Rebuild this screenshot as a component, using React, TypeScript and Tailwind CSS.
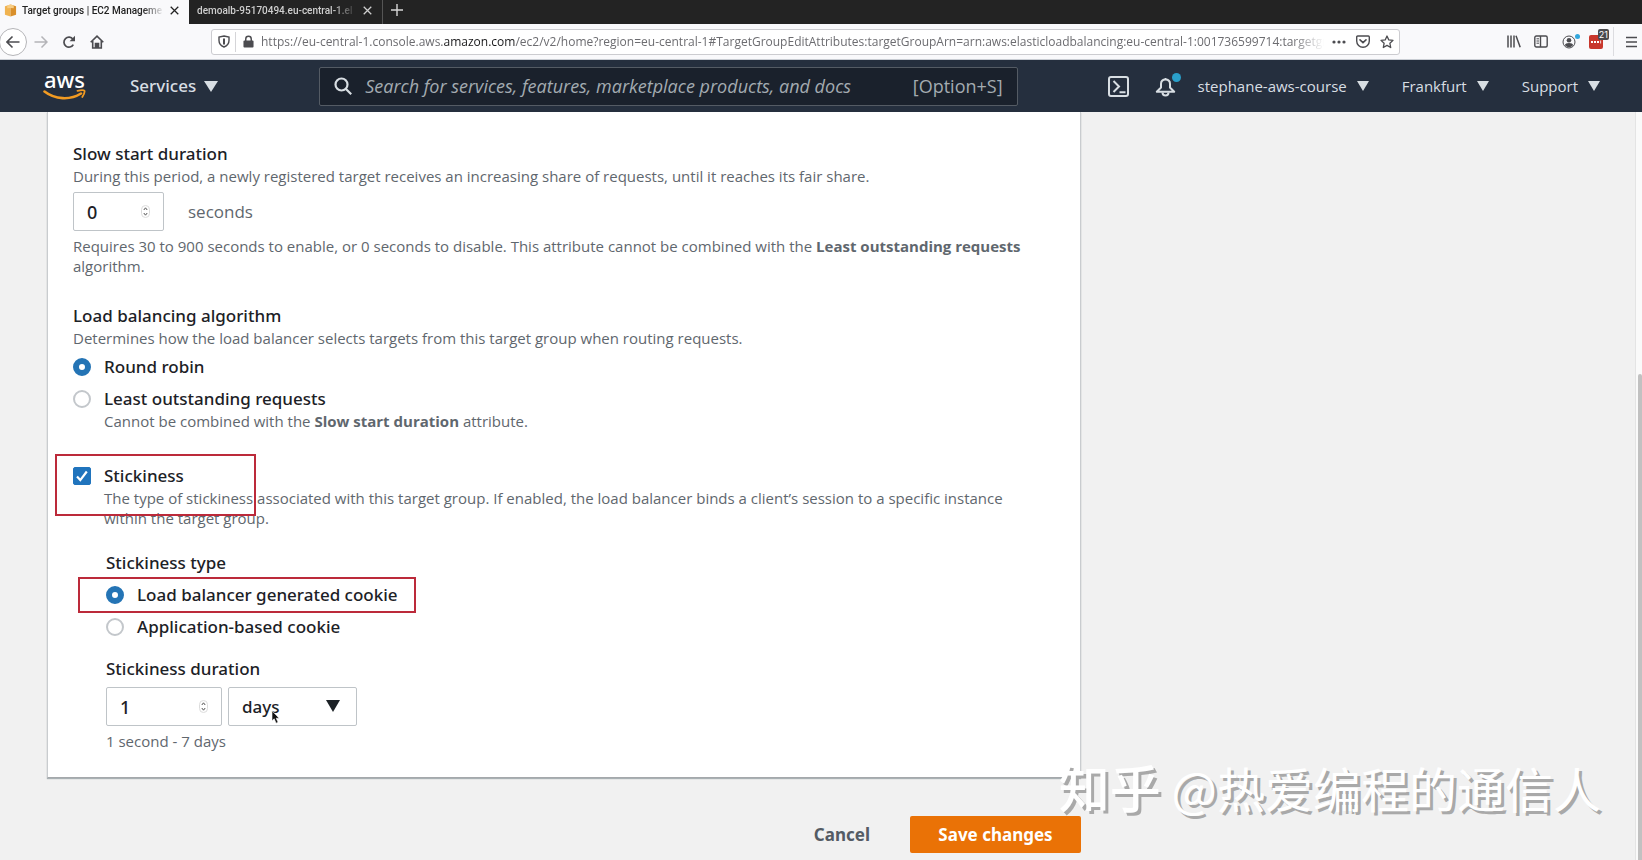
import { useState } from "react";
import type { ReactNode } from "react";

const url = {
  start: "https://eu-central-1.console.aws.",
  host: "amazon.com",
  rest: "/ec2/v2/home?region=eu-central-1#TargetGroupEditAttributes:targetGroupArn=arn:aws:elasticloadbalancing:eu-central-1:001736599714:targetgrou",
};

const menus = ["stephane-aws-course", "Frankfurt", "Support"];

const Triangle = ({ className }: { className: string }) => (
  <svg viewBox="0 0 14 12" preserveAspectRatio="none" className={className} fill="currentColor">
    <path d="M0 0h14L7 12z" />
  </svg>
);

const CloseIcon = () => (
  <svg viewBox="0 0 10 10" className="size-[9px]" fill="none" stroke="currentColor" strokeWidth="1.4">
    <path d="M.8.8l8.4 8.4M9.2.8L.8 9.2" />
  </svg>
);

const Tabs = () => (
  <div className="flex h-6 items-stretch bg-[#232323] font-['Roboto',sans-serif] text-[10px]">
    <div className="flex w-[189px] items-center bg-[#f9f9fb] pb-1 pl-1 text-[#222]">
      <svg viewBox="0 0 14 14" className="size-[13px] shrink-0">
        <path d="M1 2.5L7 .5v13l-6-2z" fill="#f0b350" />
        <path d="M7 .5l6 2v9l-6 2z" fill="#d98f2b" />
        <path d="M3.5 1.7L7 .5l3.500 1.200v3L7 4.200l-3.500.5z" fill="#f7cd84" />
      </svg>
      <span className="ml-[5px] w-[142px] overflow-hidden whitespace-nowrap font-medium [mask-image:linear-gradient(to_right,black_85%,transparent)]">
        Target groups | EC2 Manageme
      </span>
      <button aria-label="Close tab" className="ml-[6px]">
        <CloseIcon />
      </button>
    </div>
    <div className="flex w-[194px] items-center border-r border-[#555] pb-1 pl-2 text-[#cfcfcf]">
      <span className="w-[160px] overflow-hidden whitespace-nowrap font-medium [mask-image:linear-gradient(to_right,black_85%,transparent)]">
        demoalb-95170494.eu-central-1.el
      </span>
      <button aria-label="Close tab" className="ml-[6px]">
        <CloseIcon />
      </button>
    </div>
    <button aria-label="New tab" className="pb-1 pl-2 text-[#d8d8d8]">
      <svg viewBox="0 0 12 12" className="size-3" stroke="currentColor" strokeWidth="1.4">
        <path d="M6 0v12M0 6h12" />
      </svg>
    </button>
  </div>
);

const Toolbar = () => (
  <div className="flex h-9 items-center border-b border-[#c9cdd3] bg-[#f9f9fb] text-[#4c4c50]">
    <button aria-label="Back" className="-ml-px grid size-7 place-items-center rounded-full border border-[#b5b5b8] bg-white">
      <svg viewBox="0 0 14 14" className="size-[14px]" fill="none" stroke="currentColor" strokeWidth="1.6">
        <path d="M13.500 7H1.200M6.500 1.500L1 7l5.500 5.500" />
      </svg>
    </button>
    <button aria-label="Forward" className="ml-[7px] text-[#b4b4b8]">
      <svg viewBox="0 0 14 14" className="size-[14px]" fill="none" stroke="currentColor" strokeWidth="1.5">
        <path d="M.5 7h12.300M7.500 1.500L13 7l-5.500 5.500" />
      </svg>
    </button>
    <button aria-label="Reload" className="ml-[14px]">
      <svg viewBox="0 0 14 14" className="size-[14px]" fill="none" stroke="currentColor" strokeWidth="1.7">
        <path d="M11.300 9.600A5 5 0 1 1 11 4.200" />
        <path d="M13 .8v5.400H7.600z" fill="currentColor" stroke="none" />
      </svg>
    </button>
    <button aria-label="Home" className="ml-[14px]">
      <svg viewBox="0 0 14 14" className="size-[14px]" fill="none" stroke="currentColor" strokeWidth="1.6">
        <path d="M.7 7.300L7 1.200l6.300 6.100M2.700 6v7h8.600V6" />
        <path d="M5.500 13V8.500h3V13" fill="currentColor" />
      </svg>
    </button>
    <div className="ml-[107px] flex h-[26px] min-w-0 flex-1 items-center rounded-[3px] border border-[#ccccd0] bg-white pl-[6px] pr-[5px]">
      <svg viewBox="0 0 12 13" className="h-[13px] w-3 shrink-0" fill="none" stroke="currentColor" strokeWidth="1.4">
        <path d="M6 1l5 1v3.500c0 3-2 5.300-5 6.500C3 10.800 1 8.500 1 5.500V2z" />
        <path d="M6 3.500v6" strokeWidth="2" />
      </svg>
      <span className="mx-[5px] h-5 w-px shrink-0 bg-[#d5d5d8]" />
      <svg viewBox="0 0 12 14" className="ml-[2px] h-[13px] w-[11px] shrink-0">
        <path d="M3 7V4.200a3 3 0 0 1 6 0V7" fill="none" stroke="currentColor" strokeWidth="1.600" />
        <rect x=".5" y="6" width="11" height="7.500" rx="1" fill="currentColor" />
      </svg>
      <p className="ml-[7px] min-w-0 flex-1 overflow-hidden whitespace-nowrap font-['Open_Sans',sans-serif] text-xs text-[#6c6c70] [mask-image:linear-gradient(to_right,black_97%,transparent)]">
        {url.start}
        <span className="text-[#18181a]">{url.host}</span>
        {url.rest}
      </p>
      <button aria-label="Page actions" className="ml-2">
        <svg viewBox="0 0 14 4" className="h-1 w-[14px]" fill="currentColor">
          <circle cx="2" cy="2" r="1.600" />
          <circle cx="7" cy="2" r="1.600" />
          <circle cx="12" cy="2" r="1.600" />
        </svg>
      </button>
      <button aria-label="Save to Pocket" className="ml-[10px]">
        <svg viewBox="0 0 14 13" className="h-[13px] w-[14px]" fill="none" stroke="currentColor" strokeWidth="1.400">
          <path d="M1.700 1h10.600q1 0 1 1v4a6.300 6.300 0 0 1-12.600 0V2q0-1 1-1z" />
          <path d="M4 4.800l3 2.800 3-2.800" strokeLinecap="round" strokeWidth="1.600" />
        </svg>
      </button>
      <button aria-label="Bookmark" className="ml-[10px]">
        <svg viewBox="0 0 14 14" className="size-[14px]" fill="none" stroke="currentColor" strokeWidth="1.300" strokeLinejoin="round">
          <path d="M7 1l1.800 3.900 4.200.5-3.100 2.900.8 4.200L7 10.400l-3.700 2.100.8-4.200L1 5.400l4.200-.5z" />
        </svg>
      </button>
    </div>
    <div className="ml-[107px] flex h-full items-center">
      <button aria-label="Library">
        <svg viewBox="0 0 14 13" className="h-[13px] w-[14px]" fill="none" stroke="currentColor" strokeWidth="1.500">
          <path d="M1 .5v12M4 .5v12M7 .5v12M9 .8l4.200 11.500" />
        </svg>
      </button>
      <button aria-label="Sidebars" className="ml-[13px]">
        <svg viewBox="0 0 14 13" className="h-[13px] w-[14px]" fill="none" stroke="currentColor" strokeWidth="1.400">
          <rect x=".8" y="1" width="12.400" height="11" rx="1.500" />
          <path d="M6.500 1v11" />
          <path d="M2.500 3.800h2.500M2.500 6h2.500M2.500 8.200h2.500" strokeWidth="1" />
        </svg>
      </button>
      <button aria-label="Account" className="relative ml-[14px]">
        <svg viewBox="0 0 14 14" className="size-[14px]">
          <circle cx="7" cy="7" r="6" fill="none" stroke="currentColor" />
          <circle cx="7" cy="5.300" r="2.300" fill="currentColor" />
          <path d="M2.800 10Q3.500 8 7 8t4.200 2Q9.500 12.200 7 12.200T2.800 10z" fill="currentColor" />
        </svg>
        <span className="absolute -right-1 -top-px size-[5px] rounded-full bg-[#33a7dd]" />
      </button>
      <button aria-label="Extension" className="relative ml-[13px] size-[14px] rounded-[2px] bg-[#c8372d]">
        <svg viewBox="0 0 14 14" className="size-[14px]" fill="#fff">
          <path d="M2 6h2v2H2zM5 6h2v2H5zM8 6h2v2H8zM11.300 5.500h.8v3h-.8z" />
        </svg>
        <span className="absolute -right-[6px] -top-[6px] rounded-[2px] bg-[#4a4a4c] px-px text-[9px] leading-[11px] text-white">21</span>
      </button>
      <button aria-label="Menu" className="ml-[10px] h-[29px] border-l border-[#dcdce0] pl-3 pr-[5px]">
        <svg viewBox="0 0 11 12" className="h-3 w-[11px]" stroke="currentColor" strokeWidth="1.500">
          <path d="M0 1.500h11M0 6h11M0 10.500h11" />
        </svg>
      </button>
    </div>
  </div>
);

const AwsNav = () => (
  <header className="flex h-[52px] items-center bg-[#252f3e] pl-[43px] pr-[42px] font-['Open_Sans',sans-serif] text-[#d8dee3]">
    <a href="#" aria-label="aws" className="flex w-[43px] shrink-0 flex-col items-center font-['Noto_Sans',sans-serif]">
      <span className="text-[22px] font-medium leading-4 text-white">aws</span>
      <svg viewBox="0 0 43 12" className="mt-[2px] h-3 w-[43px]" fill="none" stroke="#f29b22" strokeLinecap="round">
        <path d="M1.500 2.500C12 10.500 27 11.500 38 4.500" strokeWidth="2.600" />
        <path d="M34.500 1.800q6-1.300 7 0 .6 2-2.200 6.200" strokeWidth="1.800" />
      </svg>
    </a>
    <button className="ml-11 flex items-center gap-2 font-['Noto_Sans',sans-serif] text-[17px] font-medium">
      Services
      <Triangle className="h-[11px] w-[14px]" />
    </button>
    <label className="ml-[101px] mr-[90px] flex h-[39px] min-w-0 flex-1 items-center rounded-[2px] border border-[#545b64] bg-[#1a212c] px-[14px]">
      <svg viewBox="0 0 18 18" className="size-[18px] shrink-0" fill="none" stroke="currentColor" strokeWidth="2.200">
        <circle cx="7.500" cy="7.500" r="6" />
        <path d="M12 12l5.200 5.200" />
      </svg>
      <input
        aria-label="Search"
        placeholder="Search for services, features, marketplace products, and docs"
        className="ml-[13px] min-w-0 flex-1 text-[18px] italic outline-none placeholder:text-[#a3abb1]"
      />
      <span className="text-[18px] text-[#a3abb1]">[Option+S]</span>
    </label>
    <button aria-label="CloudShell">
      <svg viewBox="0 0 21 21" className="size-[21px]" fill="none" stroke="currentColor" strokeWidth="2">
        <rect x="1" y="1" width="19" height="19" rx="2" />
        <path d="M5.500 5l5.500 5.500L5.500 16M11.500 16.200h6" />
      </svg>
    </button>
    <button aria-label="Notifications" className="relative ml-[26px]">
      <svg viewBox="0 0 21 21" className="size-[21px]" fill="none" stroke="currentColor" strokeWidth="2" strokeLinejoin="round">
        <path d="M10.500 2v1.500M10.500 3.500C7.500 3.500 6 5.500 6 8v3.500L1.800 15.800h17.400L15 11.500V8c0-2.500-1.500-4.500-4.500-4.500z" />
        <path d="M7.500 16.500c0 4 6 4 6 0" />
      </svg>
      <span className="absolute -right-[5px] -top-[3px] size-[9px] rounded-full bg-[#2a9fc9]" />
    </button>
    <div className="ml-[22px] flex gap-[33px]">
      {menus.map((menu) => (
        <button key={menu} className="flex items-center gap-[10px] text-[15px] font-medium">
          {menu}
          <Triangle className="h-[10px] w-3" />
        </button>
      ))}
    </div>
  </header>
);

const Heading = ({ children, htmlFor }: { children: ReactNode; htmlFor?: string }) =>
  htmlFor ? (
    <label htmlFor={htmlFor} className="block text-[17px] font-medium leading-6">
      {children}
    </label>
  ) : (
    <h3 className="text-[17px] font-medium leading-6">{children}</h3>
  );

const Hint = ({ children, className = "" }: { children: ReactNode; className?: string }) => (
  <p className={`font-['Open_Sans',sans-serif] text-[15px] leading-5 text-[#5f676e] ${className}`}>{children}</p>
);

type RadioProps = {
  name: string;
  label: string;
  checked: boolean;
  onChange: () => void;
};

const Radio = ({ name, label, checked, onChange }: RadioProps) => (
  <label className="flex items-center gap-[13px] text-[17px] font-medium leading-6">
    <input
      type="radio"
      name={name}
      checked={checked}
      onChange={onChange}
      className="size-[18px] appearance-none rounded-full border-2 border-[#c3c7cb] bg-white checked:border-[6px] checked:border-[#2474b5]"
    />
    {label}
  </label>
);

type NumberInputProps = {
  id: string;
  value: string;
  onChange: (value: string) => void;
  className: string;
};

const NumberInput = ({ id, value, onChange, className }: NumberInputProps) => (
  <div className={`relative h-[39px] ${className}`}>
    <input
      id={id}
      type="number"
      value={value}
      onChange={(e) => onChange(e.target.value)}
      className="size-full rounded-[2px] border border-[#bfc4c8] bg-white pl-[13px] text-[18px] font-medium outline-none [appearance:textfield] [&::-webkit-inner-spin-button]:appearance-none"
    />
    <svg viewBox="0 0 9 13" className="pointer-events-none absolute right-[14px] top-[13px] h-[13px] w-[9px]" fill="none" stroke="#555">
      <rect x=".5" y=".5" width="8" height="12" rx="4" stroke="#dcdcdc" />
      <path d="M2.800 5l1.700-2.200L6.200 5M2.800 8l1.700 2.200L6.200 8" />
    </svg>
  </div>
);

const AttributesForm = () => {
  const [slowStart, setSlowStart] = useState("0");
  const [algorithm, setAlgorithm] = useState("round-robin");
  const [sticky, setSticky] = useState(true);
  const [cookie, setCookie] = useState("lb");
  const [duration, setDuration] = useState("1");

  return (
    <section className="border-x border-b border-[#c9cccf] border-b-[#a5a8ab] bg-white px-[25px] pb-[26px] pt-[30px] shadow-[0_1px_1px_rgba(0,28,36,0.3)]">
      <Heading htmlFor="slow-start">Slow start duration</Heading>
      <Hint>
        During this period, a newly registered target receives an increasing share of requests, until it reaches its fair share.
      </Hint>
      <div className="mt-[6px] flex items-center gap-6">
        <NumberInput id="slow-start" value={slowStart} onChange={setSlowStart} className="w-[91px]" />
        <span className="font-['Open_Sans',sans-serif] text-[17px] text-[#5f676e]">seconds</span>
      </div>
      <Hint className="mt-[5px]">
        Requires 30 to 900 seconds to enable, or 0 seconds to disable. This attribute cannot be combined with the{" "}
        <b>Least outstanding requests</b> algorithm.
      </Hint>

      <div className="mt-7">
        <Heading>Load balancing algorithm</Heading>
        <Hint>Determines how the load balancer selects targets from this target group when routing requests.</Hint>
        <div className="mt-[7px] flex flex-col gap-2">
          <Radio
            name="algorithm"
            label="Round robin"
            checked={algorithm === "round-robin"}
            onChange={() => setAlgorithm("round-robin")}
          />
          <Radio
            name="algorithm"
            label="Least outstanding requests"
            checked={algorithm === "least"}
            onChange={() => setAlgorithm("least")}
          />
        </div>
        <Hint className="ml-[31px]">
          Cannot be combined with the <b>Slow start duration</b> attribute.
        </Hint>
      </div>

      <div className="relative mt-[33px]">
        <label className="flex items-center gap-[13px] text-[17px] font-medium leading-6">
          <span className="relative size-[18px]">
            <input
              type="checkbox"
              checked={sticky}
              onChange={(e) => setSticky(e.target.checked)}
              className="block size-[18px] appearance-none rounded-[2px] border border-[#aab7b8] checked:border-[#2074bd] checked:bg-[#2074bd]"
            />
            {sticky && (
              <svg viewBox="0 0 18 18" className="pointer-events-none absolute inset-0" fill="none" stroke="#fff" strokeWidth="2.200">
                <path d="M4 9.500l3.300 3.600L13.800 4.500" />
              </svg>
            )}
          </span>
          Stickiness
        </label>
        <Hint className="ml-[31px] mr-4">
          The type of stickiness associated with this target group. If enabled, the load balancer binds a client’s session to a
          specific instance within the target group.
        </Hint>
        <div className="pointer-events-none absolute -left-[18px] -top-[10px] h-[62px] w-[201px] border-2 border-[#bc2a3a]" />
      </div>

      <div className="ml-[33px] mt-[23px]">
        <Heading>Stickiness type</Heading>
        <div className="relative mt-2 flex flex-col gap-2">
          <Radio
            name="cookie"
            label="Load balancer generated cookie"
            checked={cookie === "lb"}
            onChange={() => setCookie("lb")}
          />
          <Radio name="cookie" label="Application-based cookie" checked={cookie === "app"} onChange={() => setCookie("app")} />
          <div className="pointer-events-none absolute -left-7 -top-[6px] h-9 w-[338px] border-2 border-[#bc2a3a]" />
        </div>
        <div className="mt-[18px]">
          <Heading htmlFor="duration">Stickiness duration</Heading>
          <div className="mt-[6px] flex gap-[6px]">
            <NumberInput id="duration" value={duration} onChange={setDuration} className="w-[116px]" />
            <div className="relative h-[39px] w-[129px]">
              <select
                aria-label="Stickiness duration unit"
                defaultValue="days"
                className="size-full appearance-none rounded-[2px] border border-[#bfc4c8] bg-white pl-[13px] text-[17px] font-medium outline-none"
              >
                <option>seconds</option>
                <option>minutes</option>
                <option>hours</option>
                <option>days</option>
              </select>
              <Triangle className="pointer-events-none absolute right-[17px] top-[13px] h-3 w-[14px]" />
              {/* mouse pointer */}
              <svg viewBox="0 0 9 14" className="pointer-events-none absolute left-[43px] top-[23px] h-[14px] w-[9px]">
                <path d="M1 .8v10l2.200-2 1.900 4.400 2-.9-1.900-4.100h3z" fill="#111" stroke="#fff" strokeWidth=".6" />
              </svg>
            </div>
          </div>
          <Hint className="mt-[5px]">1 second - 7 days</Hint>
        </div>
      </div>
    </section>
  );
};

const App = () => {
  return (
    <div className="flex min-h-screen flex-col bg-[#f1f1f1] font-['Inter',sans-serif]">
      <Tabs />
      <Toolbar />
      <div className="flex flex-1 flex-col font-['Noto_Sans',sans-serif] text-[#1c2126]">
        <AwsNav />
        <div className="relative flex flex-1 justify-between overflow-hidden">
          <main className="ml-[47px] w-full max-w-[1034px]">
            <AttributesForm />
            <div className="mb-[5px] mt-[38px] flex items-center justify-end gap-10 text-[17px] font-bold">
              <button className="text-[#545b64]">Cancel</button>
              <button className="h-[37px] w-[171px] rounded-[2px] bg-[#ea7206] text-white">Save changes</button>
            </div>
          </main>
          <div className="relative w-[7px] shrink-0 border-l border-[#e4e4e4] bg-[#fafafa]">
            <div className="absolute bottom-0 right-0 top-[35%] w-1 rounded-t-sm bg-[#c1c1c1]" />
          </div>
          <div className="pointer-events-none absolute bottom-12 right-[41px] whitespace-nowrap font-['Noto_Sans_CJK_SC',sans-serif] text-5xl text-white [text-shadow:3px_3px_0_#a9a9a9]">
            <span className="text-[51px] font-medium">知乎</span> @热爱编程的通信人
          </div>
        </div>
      </div>
    </div>
  );
};

export default App;
